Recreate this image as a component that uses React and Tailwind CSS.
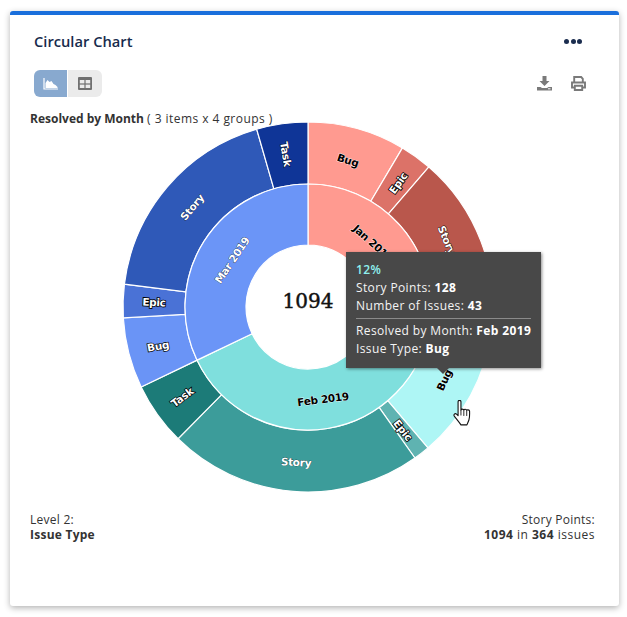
import React from "react";

const CX = 308, CY = 307;
const R0 = 62, R1 = 123, R2 = 185;
function pt(r, deg) {
  const a = (deg * Math.PI) / 180;
  return [CX + r * Math.sin(a), CY - r * Math.cos(a)];
}
function arc(r0, r1, a0, a1) {
  const [x0, y0] = pt(r1, a0);
  const [x1, y1] = pt(r1, a1);
  const [x2, y2] = pt(r0, a1);
  const [x3, y3] = pt(r0, a0);
  const l = a1 - a0 > 180 ? 1 : 0;
  return `M${x0} ${y0}A${r1} ${r1} 0 ${l} 1 ${x1} ${y1}L${x2} ${y2}A${r0} ${r0} 0 ${l} 0 ${x3} ${y3}Z`;
}

const JAN = 97.5, FEB = 244.4;
const inner = [
  { a0: 0, a1: JAN, fill: "#ff9a90" },
  { a0: JAN, a1: FEB, fill: "#7fdfdd" },
  { a0: FEB, a1: 360, fill: "#6b95f7" },
];
const outer = [
  { a0: 0, a1: 30.7, fill: "#ff9a90" },
  { a0: 30.7, a1: 40.8, fill: "#dc7268" },
  { a0: 40.8, a1: JAN, fill: "#b9574c" },
  { a0: JAN, a1: 139.6, fill: "#aef6f5" },
  { a0: 139.6, a1: 144.7, fill: "#5fb3b1" },
  { a0: 144.7, a1: 224.6, fill: "#3c9c9a" },
  { a0: 224.6, a1: FEB, fill: "#1c7b78" },
  { a0: FEB, a1: 266.6, fill: "#6a94f6" },
  { a0: 266.6, a1: 277.1, fill: "#4a72d6" },
  { a0: 277.1, a1: 343.9, fill: "#2f59b8" },
  { a0: 343.9, a1: 360, fill: "#0f3597" },
];
const labels = [
  { t: "Jan 2019", x: 373, y: 243, r: 42, dark: true, sw: 0.7 },
  { t: "Feb 2019", x: 323, y: 399, r: -7, dark: true, sw: 0.7 },
  { t: "Mar 2019", x: 232, y: 260, r: -56, dark: false, sw: 0.5 },
  { t: "Bug", x: 348, y: 160, r: 18, dark: true, sw: 0.7 },
  { t: "Epic", x: 398, y: 183, r: -54, dark: false, sw: 1.6 },
  { t: "Story", x: 447, y: 240, r: 68, dark: false, sw: 0.8 },
  { t: "Bug", x: 444, y: 380, r: -65, dark: true, sw: 0.7 },
  { t: "Epic", x: 403, y: 430, r: 52, dark: false, sw: 1.6 },
  { t: "Story", x: 296, y: 462, r: 3, dark: false, sw: 0.4 },
  { t: "Task", x: 182, y: 397, r: -37, dark: false, sw: 1.4 },
  { t: "Bug", x: 158, y: 346, r: -10, dark: false, sw: 1.4 },
  { t: "Epic", x: 154, y: 302, r: 3, dark: false, sw: 1.6 },
  { t: "Story", x: 192, y: 207, r: -50, dark: false, sw: 0.5 },
  { t: "Task", x: 286, y: 154, r: 80, dark: false, sw: 0.8 },
];

function Sunburst() {
  return (
    <svg width="627" height="617" viewBox="0 0 627 617" className="absolute left-0 top-0">
      {outer.map((s, i) => (
        <path key={i} d={arc(R1, R2, s.a0, s.a1)} fill={s.fill} stroke="#fff" strokeWidth="1.2" />
      ))}
      {inner.map((s, i) => (
        <path key={i} d={arc(R0, R1, s.a0, s.a1)} fill={s.fill} stroke="#fff" strokeWidth="1.2" />
      ))}
      {labels.map((l, i) => (
        <text
          key={i}
          x={l.x}
          y={l.y}
          transform={`rotate(${l.r} ${l.x} ${l.y})`}
          textAnchor="middle"
          dominantBaseline="central"
          fontSize="10.5"
          fontWeight="700"
          fontFamily="'DejaVu Sans', sans-serif"
          fill={l.dark ? "#000" : "#fff"}
          stroke={l.dark ? "#fff" : "#000"}
          strokeWidth={l.sw}
          paintOrder="stroke"
          letterSpacing="-0.3"
        >
          {l.t}
        </text>
      ))}
      <text
        x={CX}
        y={301}
        textAnchor="middle"
        dominantBaseline="central"
        fontSize="20"
        fontFamily="'DejaVu Serif', serif"
        fill="#111"
        stroke="#111"
        strokeWidth="0.45"
      >
        1094
      </text>
    </svg>
  );
}

function HandCursor() {
  return (
    <svg width="21" height="26" viewBox="1 1 16 23.5" className="absolute left-[452px] top-[400px]">
      <path
        d="M5 2.5c0-1.6 2.6-1.6 2.6 0V10c0-1 2.4-1.2 2.6.2 0-1 2.4-1.2 2.6.3.2-.9 2.4-.9 2.6.6.1 3 .1 6-.6 8-.6 1.6-1.2 3-1.8 4.4H7.6C6 21 3.4 18 1.6 15.6c-1-1.4.6-3 2-1.8L5 15.2z"
        fill="#fff"
        stroke="#111"
        strokeWidth="1"
        strokeLinejoin="round"
      />
      <path d="M7.6 10v5M10.2 10.4v5M12.8 10.8v4.6" stroke="#111" strokeWidth="0.8" fill="none" />
    </svg>
  );
}

export default function App() {
  return (
    <div
      className="relative h-[617px] w-[627px] overflow-hidden bg-white text-[12.5px] text-[#333]"
      style={{ fontFamily: "'Open Sans','Noto Sans',sans-serif" }}
    >
      <div className="absolute left-[10px] top-[11px] flex h-[595px] w-[609px] flex-col rounded-[3px] border-t-[4px] border-[#1a6fdc] bg-white px-5 shadow-[0_2px_6px_rgba(0,0,0,0.3)]">
        <div className="flex h-[52px] items-center justify-between pl-1 pr-[17px] pt-[1px]">
          <span className="text-[14.7px] font-semibold text-[#172b4d]">Circular Chart</span>
          <span className="flex gap-[1.5px] pb-[1px]">
            <i className="h-[5px] w-[5px] rounded-full bg-[#1b2d4f]" />
            <i className="h-[5px] w-[5px] rounded-full bg-[#1b2d4f]" />
            <i className="h-[5px] w-[5px] rounded-full bg-[#1b2d4f]" />
          </span>
        </div>
        <div className="mt-[3px] flex items-center justify-between pl-1 pr-[13px]">
          <div className="flex h-[27px] w-[68px] overflow-hidden rounded-md">
            <div className="flex w-[34px] items-center justify-center border-r border-white bg-[#88a9cf]">
              <svg width="16" height="13" viewBox="0 0 16 13">
                <path d="M1 1v11h14" stroke="#fff" strokeWidth="1.2" fill="none" />
                <path d="M2.5 11V6l2-3 2 2 2-1 2 3 2 1 2 2v1z" fill="#fff" />
              </svg>
            </div>
            <div className="flex flex-1 items-center justify-center bg-[#ebebeb]">
              <svg width="14" height="13" viewBox="0 0 14 13">
                <rect x="0" y="0" width="14" height="13" rx="1" fill="#707070" />
                <rect x="1.8" y="3" width="4.6" height="3.4" fill="#ebebeb" />
                <rect x="7.6" y="3" width="4.6" height="3.4" fill="#ebebeb" />
                <rect x="1.8" y="7.6" width="4.6" height="3.4" fill="#ebebeb" />
                <rect x="7.6" y="7.6" width="4.6" height="3.4" fill="#ebebeb" />
              </svg>
            </div>
          </div>
          <div className="flex items-center gap-[19px]">
            <svg width="15" height="15" viewBox="0 0 15 15">
              <path d="M5.5 0h4v5h3l-5 5-5-5h3z" fill="#7a7a7a" />
              <path d="M0 11h3.5l1.5 1h5l1.5-1H15v3.5H0z" fill="#7a7a7a" />
              <rect x="11" y="12.3" width="2.5" height="1" fill="#fff" />
            </svg>
            <svg width="15" height="15" viewBox="0 0 15 15">
              <path
                d="M3.2 6V1h7l1.6 1.8V6M3 11.5H1V6.5h13v5h-2M3.8 9.8h7.4V14H3.8z"
                fill="none"
                stroke="#7a7a7a"
                strokeWidth="1.9"
              />
            </svg>
          </div>
        </div>
        <div className="mt-[13px] whitespace-nowrap text-[12px] leading-[18px] text-[#333]">
          <b className="font-bold">Resolved by Month</b>{" "}
          <span className="tracking-[0.45px]">( 3 items x 4 groups )</span>
        </div>
        <div className="mt-auto mb-[64px] flex justify-between text-[12px] leading-[15px]">
          <div className="tracking-[0.25px]">
            Level 2:
            <br />
            <b>Issue Type</b>
          </div>
          <div className="pr-1 text-right tracking-[0.25px]">
            Story Points:
            <br />
            <span className="tracking-[0.5px]">
              <b>1094</b> in <b>364</b> issues
            </span>
          </div>
        </div>
      </div>

      <Sunburst />

      <div className="absolute left-[346px] top-[252px] flex h-[116px] w-[195px] flex-col whitespace-nowrap bg-[#484848] pl-[10px] pr-[10px] pt-[9px] text-[12px] leading-[18px] tracking-[0.38px] text-[#f4f4f4] shadow-[1px_1px_3px_rgba(0,0,0,0.45)]">
        <span className="font-semibold text-[#8ff0ee]">12%</span>
        <span>
          Story Points: <b className="text-white">128</b>
        </span>
        <span>
          Number of Issues: <b className="text-white">43</b>
        </span>
        <i className="my-[3px] h-px w-full shrink-0 bg-[#8a8a8a]" />
        <span>
          Resolved by Month: <b className="text-white">Feb 2019</b>
        </span>
        <span>
          Issue Type: <b className="text-white">Bug</b>
        </span>
        <i className="absolute bottom-[-6px] left-[91px] h-0 w-0 border-x-[6px] border-t-[6px] border-x-transparent border-t-[#484848]" />
      </div>

      <HandCursor />
    </div>
  );
}
